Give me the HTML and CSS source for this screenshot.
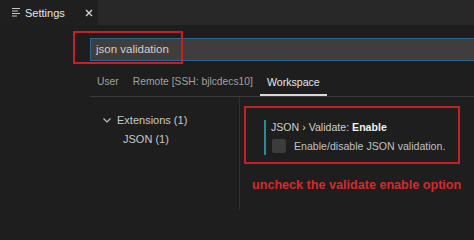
FILE: index.html
```html
<!DOCTYPE html>
<html>
<head>
<meta charset="utf-8">
<link rel="stylesheet" href="styles.css">
</head>
<body>
<div class="tabbar">
  <div class="tab">
    <svg class="tab-icon" width="9" height="9" viewBox="0 0 9 9"><path d="M0 0.5H8M0 3H6M0 5.5H8M0 8H5" stroke="#c5c5c5" stroke-width="1.1" fill="none"/></svg>
    <span class="tab-label">Settings</span>
    <svg class="tab-close" width="8" height="8" viewBox="0 0 8 8"><path d="M1 1L7 7M7 1L1 7" stroke="#d4d4d4" stroke-width="1.4" fill="none"/></svg>
  </div>
</div>
<div class="editor">
  <div class="search-row">
    <div class="search">json validation</div>
    <div class="mark mark-search"></div>
  </div>
  <div class="scopes">
    <span class="scope">User</span>
    <span class="scope">Remote [SSH: bjlcdecs10]</span>
    <span class="scope active">Workspace</span>
  </div>
  <div class="body">
    <div class="toc">
      <div class="toc-item"><svg class="chev" width="8" height="5" viewBox="0 0 8 5"><path d="M0.5 0.5L4 4L7.5 0.5" stroke="#c5c5c5" stroke-width="1.1" fill="none"/></svg>Extensions (1)</div>
      <div class="toc-item sub">JSON (1)</div>
    </div>
    <div class="list">
      <div class="setting">
        <div class="setting-inner">
          <div class="setting-title">JSON › Validate: <b>Enable</b></div>
          <div class="setting-value"><span class="checkbox"></span><span class="desc">Enable/disable JSON validation.</span></div>
        </div>
      </div>
      <div class="note">uncheck the validate enable option</div>
    </div>
  </div>
</div>
</body>
</html>
```
FILE: styles.css
```css
html, body {
  margin: 0;
  padding: 0;
  background: #1e1e1e;
  width: 474px;
  height: 210px;
  overflow: hidden;
  font-family: "Liberation Sans", Arial, sans-serif;
  font-size: 11px;
  color: #cccccc;
}
.tabbar {
  height: 25px;
  background: #282828;
  display: flex;
}
.tab {
  width: 98px;
  background: #1f1f1f;
  display: flex;
  align-items: center;
  box-sizing: border-box;
  padding-left: 12px;
}
.tab-icon { margin-top: -1px; }
.tab-label {
  margin-left: 4px;
  color: #e6e6e6;
  font-size: 11px;
}
.tab-close { margin-left: 20px; }
.editor {
  padding-left: 90px;
}
.search-row {
  position: relative;
  margin-top: 13px;
}
.search {
  height: 23px;
  box-sizing: border-box;
  width: 400px;
  background: #3f3e3d;
  border: 1px solid #2a6592;
  padding-left: 5px;
  line-height: 21px;
  font-size: 11.5px;
  color: #d0d0d0;
}
.mark {
  position: absolute;
  border: 2px solid #c81e26;
  box-sizing: border-box;
}
.mark-search {
  left: -17px;
  top: -7px;
  width: 110px;
  height: 33px;
}
.scopes {
  margin-top: 9px;
  height: 26px;
  display: flex;
  align-items: stretch;
  border-bottom: 1px solid #3a3a3a;
  font-size: 10.3px;
}
.scope {
  padding: 0 7px;
  line-height: 24px;
  color: #a0a0a0;
  border-bottom: 2px solid transparent;
}
.scope.active {
  color: #e6e6e6;
  border-bottom-color: #d8d8d8;
  font-size: 10.6px;
}
.body {
  display: flex;
  height: 114px;
}
.toc {
  width: 149px;
  padding-top: 14px;
  box-sizing: border-box;
}
.toc-item {
  height: 19px;
  line-height: 19px;
  color: #c8c8c8;
  display: flex;
  align-items: center;
}
.toc-item .chev {
  margin-left: 13px;
  margin-right: 6px;
}
.toc-item.sub {
  padding-left: 33px;
}
.list {
  border-left: 1px solid #313131;
  padding-left: 4px;
  padding-top: 9px;
}
.setting {
  width: 216px;
  height: 58px;
  box-sizing: border-box;
  border: 2px solid #c81e26;
  padding: 12px 0 0 18px;
  font-size: 10.6px;
}
.setting-inner {
  border-left: 2px solid #2b8b97;
  padding-left: 5px;
  height: 35px;
}
.setting-title {
  line-height: 14px;
  color: #cfcfcf;
}
.setting-title b {
  color: #f0f0f0;
}
.setting-value {
  display: flex;
  align-items: center;
  margin-top: 5px;
}
.checkbox {
  width: 14px;
  height: 14px;
  background: #3c3c3c;
  border-radius: 2px;
  margin-left: 1px;
}
.desc {
  margin-left: 8px;
  color: #c0c0c0;
}
.note {
  margin-top: 14px;
  margin-left: 8px;
  color: #d42a2e;
  font-weight: bold;
  font-size: 12.6px;
}
```
